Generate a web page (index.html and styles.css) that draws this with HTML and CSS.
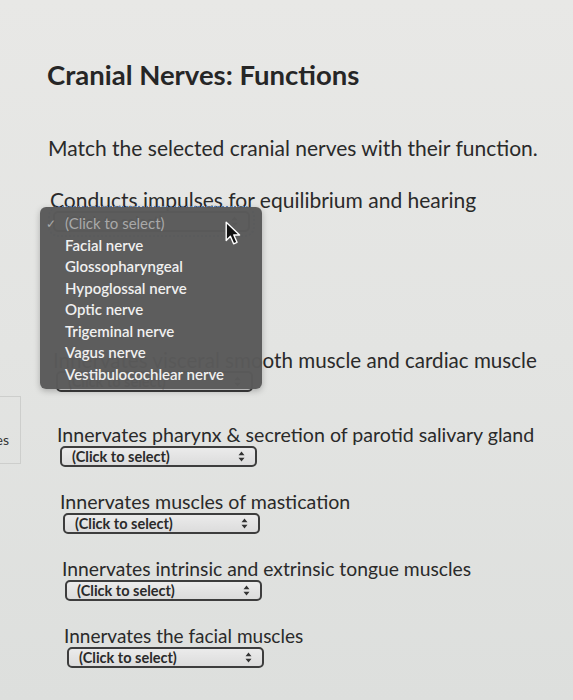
FILE: index.html
```html
<!DOCTYPE html>
<html>
<head>
<meta charset="utf-8">
<link rel="stylesheet" href="styles.css">
</head>
<body>
<div class="page">
  <aside class="side">
    <div class="side-box">es</div>
  </aside>
  <main class="main">
    <h1 class="title">Cranial Nerves: Functions</h1>
    <p class="intro">Match the selected cranial nerves with their function.</p>
    <div class="items">
      <div class="item item-1">
        <div class="label">Conducts impulses for equilibrium and hearing</div>
        <div class="select focused"><span class="select-text">(Click to select)</span><svg class="arrows" width="7" height="11" viewBox="0 0 7 11"><path d="M3.5 0.5 L6.5 4.2 H0.5 Z M3.5 10.5 L6.5 6.8 H0.5 Z" fill="#333"/></svg></div>
      </div>
      <div class="item item-2">
        <div class="label">Innervates visceral smooth muscle and cardiac muscle</div>
        <div class="select"><span class="select-text">(Click to select)</span><svg class="arrows" width="7" height="11" viewBox="0 0 7 11"><path d="M3.5 0.5 L6.5 4.2 H0.5 Z M3.5 10.5 L6.5 6.8 H0.5 Z" fill="#333"/></svg></div>
      </div>
      <div class="item item-3">
        <div class="label">Innervates pharynx &amp; secretion of parotid salivary gland</div>
        <div class="select"><span class="select-text">(Click to select)</span><svg class="arrows" width="7" height="11" viewBox="0 0 7 11"><path d="M3.5 0.5 L6.5 4.2 H0.5 Z M3.5 10.5 L6.5 6.8 H0.5 Z" fill="#333"/></svg></div>
      </div>
      <div class="item item-4">
        <div class="label">Innervates muscles of mastication</div>
        <div class="select"><span class="select-text">(Click to select)</span><svg class="arrows" width="7" height="11" viewBox="0 0 7 11"><path d="M3.5 0.5 L6.5 4.2 H0.5 Z M3.5 10.5 L6.5 6.8 H0.5 Z" fill="#333"/></svg></div>
      </div>
      <div class="item item-5">
        <div class="label">Innervates intrinsic and extrinsic tongue muscles</div>
        <div class="select"><span class="select-text">(Click to select)</span><svg class="arrows" width="7" height="11" viewBox="0 0 7 11"><path d="M3.5 0.5 L6.5 4.2 H0.5 Z M3.5 10.5 L6.5 6.8 H0.5 Z" fill="#333"/></svg></div>
      </div>
      <div class="item item-6">
        <div class="label">Innervates the facial muscles</div>
        <div class="select"><span class="select-text">(Click to select)</span><svg class="arrows" width="7" height="11" viewBox="0 0 7 11"><path d="M3.5 0.5 L6.5 4.2 H0.5 Z M3.5 10.5 L6.5 6.8 H0.5 Z" fill="#333"/></svg></div>
      </div>
    </div>

    <ul class="menu">
      <li class="opt placeholder"><span class="check">✓</span>(Click to select)</li>
      <li class="opt">Facial nerve</li>
      <li class="opt">Glossopharyngeal</li>
      <li class="opt">Hypoglossal nerve</li>
      <li class="opt">Optic nerve</li>
      <li class="opt">Trigeminal nerve</li>
      <li class="opt">Vagus nerve</li>
      <li class="opt">Vestibulocochlear nerve</li>
    </ul>
    <svg class="cursor" width="16" height="25" viewBox="0 0 16 25">
      <path d="M1.2 1.2 L1.2 19.5 L5.4 15.3 L8.6 22.8 L12 21.3 L8.8 14 L14.6 14 Z" fill="#111" stroke="#fff" stroke-width="1.4" stroke-linejoin="round"/>
    </svg>
  </main>
</div>
</body>
</html>
```

FILE: styles.css
```css
html, body {
  margin: 0;
  padding: 0;
}
body {
  width: 573px;
  height: 700px;
  overflow: hidden;
  background: linear-gradient(180deg, #e8e8e6 0%, #e3e4e2 50%, #dddfdd 100%);
  font-family: Lato, "Noto Sans", sans-serif;
  color: #2a2a2a;
}
.page {
  display: flex;
  height: 700px;
}
.side {
  width: 22px;
  flex: none;
  padding-top: 396px;
  overflow: hidden;
}
.side-box {
  width: 60px;
  height: 68px;
  margin-left: -39px;
  border: 1px solid #cdcecc;
  box-sizing: border-box;
  text-align: right;
  padding-right: 11px;
  padding-top: 34px;
  font-size: 14px;
  color: #333;
}
.main {
  position: relative;
  flex: 1;
  padding-left: 26px;
  padding-top: 59px;
}
.title {
  margin: 0 0 0 -1px;
  font-size: 27.5px;
  line-height: 32px;
  font-weight: 700;
  color: #262626;
}
.intro {
  margin: 44px 0 0 0;
  font-size: 21px;
  line-height: 26px;
}
.items {
  margin-top: 28px;
  display: flex;
  flex-direction: column;
}
.item {
  display: flex;
  flex-direction: column;
  margin-bottom: 24px;
}
.label {
  font-size: 21px;
  line-height: 22px;
}
.item-1 { padding-left: 2px; margin-bottom: 117px; }
.item-2 { padding-left: 5px; margin-bottom: 32px; }
.item-2 .label { font-size: 20.6px; }
.item-3 { padding-left: 9px; }
.item-3 .label { font-size: 19.6px; }
.item-4 { padding-left: 12px; }
.item-4 .label { font-size: 19.6px; }
.item-5 { padding-left: 14px; }
.item-5 .label { font-size: 19.3px; }
.item-6 { padding-left: 16px; }
.item-6 .label { font-size: 19px; }
.select {
  width: 197px;
  height: 21px;
  box-sizing: border-box;
  border: 2px solid #3d3d3d;
  border-radius: 5px;
  background: linear-gradient(180deg, #ebebeb 0%, #dcdcdc 100%);
  display: flex;
  align-items: center;
  justify-content: space-between;
  padding: 0 10px 0 10px;
  margin-left: 3px;
}
.select-text {
  font-size: 14.5px;
  font-weight: 700;
  color: #2a2a2a;
}
.arrows {
  display: block;
}
.focused {
  outline: 2px dotted #5b84c4;
  outline-offset: 3px;
}
.menu {
  position: absolute;
  left: 18px;
  top: 207px;
  width: 222px;
  height: 182px;
  margin: 0;
  padding: 6px 0 0 0;
  box-sizing: border-box;
  list-style: none;
  background: rgba(90, 90, 90, 0.98);
  border-radius: 6px;
  box-shadow: 0 2px 6px rgba(0,0,0,0.25);
}
.opt {
  position: relative;
  padding-left: 25px;
  font-size: 15px;
  line-height: 21.5px;
  font-weight: 600;
  color: #f0f0f0;
}
.opt.placeholder {
  color: #a9a9a9;
  font-weight: 400;
}
.check {
  position: absolute;
  left: 6px;
  top: 0;
  color: #a9a9a9;
  font-size: 12px;
}
.cursor {
  position: absolute;
  left: 203px;
  top: 221px;
}
```
